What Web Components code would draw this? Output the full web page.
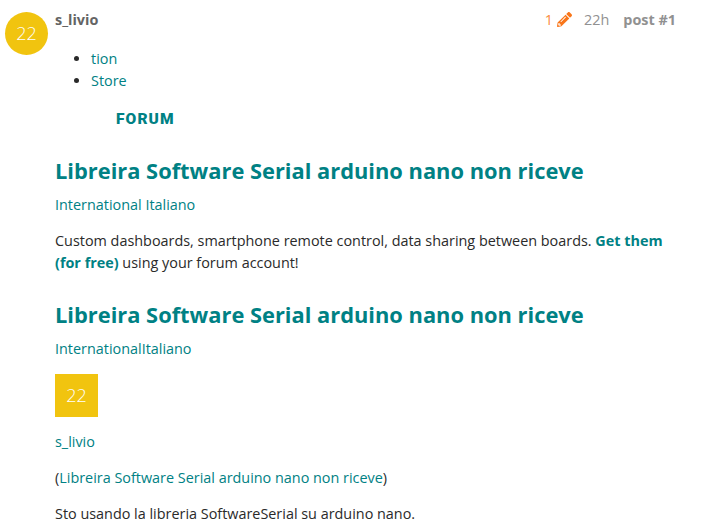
<!DOCTYPE html>
<html lang="it">
<head>
<meta charset="utf-8">
<title>Libreira Software Serial arduino nano non riceve</title>
<style>
    html, body { margin: 0; padding: 0; background: #fff; }
    body { font-family: "Open Sans", sans-serif; font-size: 14.4px; color: #2a2a2a; }
</style>
</head>
<body>
<forum-post>
    <letter-avatar slot="avatar" round>22</letter-avatar>
    <post-meta slot="meta" author="s_livio" edits="1" age="22h" number="post #1"></post-meta>
    <post-body>
        <ul>
            <li><a>tion</a></li>
            <li><a>Store</a></li>
        </ul>
        <forum-logo></forum-logo>
        <h1><a>Libreira Software Serial arduino nano non riceve</a></h1>
        <p class="crumbs"><a>International</a> <a>Italiano</a></p>
        <p class="promo">Custom dashboards, smartphone remote control, data sharing between boards. <a><b>Get them (for free)</b></a> using your forum account!</p>
        <h1 class="second"><a>Libreira Software Serial arduino nano non riceve</a></h1>
        <p class="crumbs"><a>International</a><a>Italiano</a></p>
        <letter-avatar>22</letter-avatar>
        <p class="name"><a>s_livio</a></p>
        <p class="ref">(<a>Libreira Software Serial arduino nano non riceve</a>)</p>
        <p class="last">Sto usando la libreria SoftwareSerial su arduino nano.</p>
    </post-body>
</forum-post>

<script>
class ForumPost extends HTMLElement{
    constructor(){
        super();
        this.attachShadow({mode: 'open'});
        this.shadowRoot.innerHTML = `
            <style>
                :host {
                    display: grid;
                    grid-template-columns: 43px 1fr;
                    column-gap: 7px;
                    padding: 12px 29px 0 5px;
                }
                .side { grid-row: 1 / span 2; }
            </style>
            <div class="side"><slot name="avatar"></slot></div>
            <slot name="meta"></slot>
            <slot></slot>
        `;
    }
}

class LetterAvatar extends HTMLElement{
    constructor(){
        super();
        this.attachShadow({mode: 'open'});
        this.shadowRoot.innerHTML = `
            <style>
                :host {
                    display: flex;
                    box-sizing: border-box;
                    align-items: center;
                    justify-content: center;
                    width: 43px;
                    height: 43px;
                    padding-bottom: 2px;
                    background: #f1c40f;
                    color: #fff;
                    font-size: 18px;
                    font-weight: 300;
                }
                :host([round]) { border-radius: 50%; }
            </style>
            <slot></slot>
        `;
    }
}

class PostMeta extends HTMLElement{
    constructor(){
        super();
        this.attachShadow({mode: 'open'});
        this.shadowRoot.innerHTML = `
            <style>
                :host {
                    display: flex;
                    align-items: center;
                    height: 15px;
                    margin-bottom: 1px;
                    color: #919191;
                    font-size: 14.4px;
                }
                .author { font-weight: 700; color: #646464; flex: 1; }
                .edits { display: flex; align-items: center; gap: 4px; color: #fb8b3c; }
                svg { width: 15px; height: 15px; fill: #f9761a; }
                .age { margin-left: 12px; }
                .num { margin-left: 14px; font-weight: 700; }
            </style>
            <span class="author"></span>
            <span class="edits"><span class="count"></span>
                <svg viewBox="0 0 512 512"><path d="M497.9 142.1l-46.1 46.1c-4.7 4.7-12.3 4.7-17 0l-111-111c-4.7-4.7-4.7-12.3 0-17l46.1-46.1c18.7-18.7 49.1-18.7 67.9 0l60.1 60.1c18.8 18.7 18.8 49.1 0 67.9zM284.2 99.8L21.6 362.4.4 483.9c-2.9 16.4 11.4 30.6 27.8 27.8l121.5-21.3 262.6-262.6c4.7-4.7 4.7-12.3 0-17l-111-111c-4.8-4.7-12.4-4.7-17.1 0zM124.1 339.9c-5.5-5.5-5.5-14.3 0-19.8l154-154c5.5-5.5 14.3-5.5 19.8 0s5.5 14.3 0 19.8l-154 154c-5.5 5.5-14.3 5.5-19.8 0zM88 424h48v36.3l-64.5 11.3-31.1-31.1L51.7 376H88v48z"/></svg>
            </span>
            <span class="age"></span>
            <span class="num"></span>
        `;
    }

    connectedCallback(){
        this.shadowRoot.querySelector('.author').textContent = this.getAttribute('author');
        this.shadowRoot.querySelector('.count').textContent = this.getAttribute('edits');
        this.shadowRoot.querySelector('.age').textContent = this.getAttribute('age');
        this.shadowRoot.querySelector('.num').textContent = this.getAttribute('number');
    }
}

class ForumLogo extends HTMLElement{
    constructor(){
        super();
        this.attachShadow({mode: 'open'});
        this.shadowRoot.innerHTML = `
            <style>
                :host {
                    display: block;
                    margin: 18px 0 0 61px;
                    height: 19px;
                    line-height: 19px;
                    font-family: Roboto, sans-serif;
                    font-weight: 900;
                    font-size: 15.5px;
                    letter-spacing: 1.1px;
                    color: #008184;
                }
            </style>
            FORUM
        `;
    }
}

class PostBody extends HTMLElement{
    constructor(){
        super();
        const root = this.attachShadow({mode: 'open'});
        root.innerHTML = `
            <style>
                :host { display: block; line-height: 22px; }
                ::slotted(ul) { margin: 20px 0 0; padding: 0 0 0 36px; }
                ::slotted(h1) { margin: 27px 0 0; font-size: 21.85px; line-height: 29px; font-weight: 700; }
                ::slotted(h1.second) { margin-top: 0; }
                ::slotted(p) { margin: 0; }
                ::slotted(p.crumbs) { margin: 9px 0 0; }
                ::slotted(p.promo) { margin: 14px 0 26px; }
                ::slotted(letter-avatar) { margin: 14px 0 0; }
                ::slotted(p.name) { margin: 14px 0 0; }
                ::slotted(p.ref) { margin: 14px 0 0; }
                ::slotted(p.last) { margin: 14px 0 0; }
            </style>
            <slot></slot>
        `;
    }
}

customElements.define('forum-post', ForumPost);
customElements.define('letter-avatar', LetterAvatar);
customElements.define('post-meta', PostMeta);
customElements.define('forum-logo', ForumLogo);
customElements.define('post-body', PostBody);
</script>
<style>
    post-body a { color: #008184; text-decoration: none; }
    post-body li { height: 22px; }
</style>
</body>
</html>
